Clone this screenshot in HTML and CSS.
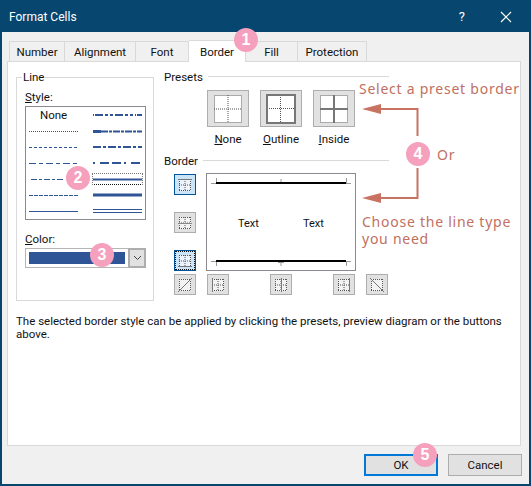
FILE: index.html
```html
<!DOCTYPE html>
<html lang="en">
<head>
    <meta charset="UTF-8">
    <title>Format Cells</title>
    <link rel="stylesheet" href="styles.css">
</head>
<body>
    <svg class="defs" width="0" height="0">
        <symbol id="dots" viewBox="0 0 22 22">
            <rect x="5" y="5" width="12" height="12" fill="#fff" fill-opacity="0.6"/>
            <path d="M5 5.500H17M5 16.500H17M5.500 5V17M16.500 5V17M5 11H17M11 5V17" fill="none" stroke="#555" stroke-dasharray="1 1"/>
        </symbol>
        <symbol id="square" viewBox="0 0 22 22">
            <rect x="5" y="5" width="12" height="12" fill="#fff" fill-opacity="0.6"/>
            <path d="M5 5.500H17M5 16.500H17M5.500 5V17M16.500 5V17" fill="none" stroke="#555" stroke-dasharray="1 1"/>
        </symbol>
    </svg>
    <div class="window">
        <div class="titlebar">
            <span class="title">Format Cells</span>
            <span class="help">?</span>
            <svg class="close" width="12" height="12" viewBox="0 0 12 12"><path d="M1 1L11 11M11 1L1 11" stroke="#fff" stroke-width="1.200" fill="none"/></svg>
        </div>
        <div class="content">
            <div class="tabs">
                <div class="tab t-number">Number</div>
                <div class="tab t-align">Alignment</div>
                <div class="tab t-font">Font</div>
                <div class="tab t-border active">Border</div>
                <div class="tab t-fill">Fill</div>
                <div class="tab t-prot">Protection</div>
            </div>
            <div class="panel">
                <div class="columns">
                    <fieldset class="line-group">
                        <legend>Line</legend>
                        <div class="field-label"><u>S</u>tyle:</div>
                        <div class="style-list">
                            <div class="none-item">None</div>
                            <svg class="ln right"><line x1="0" x2="49" y1="4" y2="4" stroke-width="2" stroke-dasharray="1 1 8 2 3 2 3 2 8 2 3 2 3 2"/></svg>
                            <svg class="ln"><line x1="0" x2="49" y1="4.500" y2="4.500" stroke-dasharray="1 1"/></svg>
                            <svg class="ln right"><rect x="0" y="3" width="8" height="3" stroke="none"/><line x1="8" x2="49" y1="4.500" y2="4.500" stroke-width="2" stroke-dasharray="7 1 3 1"/></svg>
                            <svg class="ln"><line x1="0" x2="49" y1="4.500" y2="4.500" stroke-dasharray="3 2"/></svg>
                            <svg class="ln right"><line x1="0" x2="49" y1="4" y2="4" stroke-width="2" stroke-dasharray="8 2 3 2"/></svg>
                            <svg class="ln"><line x1="0" x2="49" y1="4.500" y2="4.500" stroke-dasharray="7 3 4 3"/></svg>
                            <svg class="ln right"><line x1="0" x2="49" y1="4" y2="4" stroke-width="2" stroke-dasharray="2 5 9 3 9 3"/></svg>
                            <svg class="ln"><line x1="2" x2="35" y1="4.500" y2="4.500" stroke-dasharray="6 2 3 2"/></svg>
                            <div class="selected-item"><svg class="ln-sel"><line x1="0" x2="49" y1="2.500" y2="2.500" stroke-width="2"/></svg></div>
                            <svg class="ln"><line x1="0" x2="49" y1="4.500" y2="4.500" stroke-dasharray="4 1"/></svg>
                            <svg class="ln right"><line x1="0" x2="49" y1="4" y2="4" stroke-width="3"/></svg>
                            <svg class="ln"><line x1="0" x2="49" y1="4.500" y2="4.500"/></svg>
                            <svg class="ln right"><path d="M0 2.500H49M0 5.500H49" fill="none"/></svg>
                        </div>
                        <div class="field-label color-label"><u>C</u>olor:</div>
                        <div class="combo">
                            <div class="swatch-wrap"><div class="swatch"></div></div>
                            <div class="combo-btn">
                                <svg width="9" height="6" viewBox="0 0 9 6"><path d="M1 1L4.500 4.500L8 1" fill="none" stroke="#444" stroke-width="1"/></svg>
                            </div>
                        </div>
                    </fieldset>

                    <div class="right-col">
                        <div class="group-head"><span>Presets</span><i></i></div>
                        <div class="presets">
                            <div class="preset">
                                <div class="preset-btn"><svg width="30" height="30" viewBox="0 0 30 30"><rect x="1" y="1" width="28" height="28" fill="#fff"/><path d="M1.500 1.500H28.500V28.500H1.500ZM1 15H29M15 1V29" fill="none" stroke="#555" stroke-dasharray="1 1"/></svg></div>
                                <span><u>N</u>one</span>
                            </div>
                            <div class="preset">
                                <div class="preset-btn"><svg width="30" height="30" viewBox="0 0 30 30"><rect x="1" y="1" width="28" height="28" fill="#fff"/><path d="M1 14.500H29M14.500 1V29" fill="none" stroke="#555" stroke-dasharray="1 1"/><rect x="1" y="1" width="28" height="28" fill="none" stroke="#777" stroke-width="2"/></svg></div>
                                <span><u>O</u>utline</span>
                            </div>
                            <div class="preset">
                                <div class="preset-btn"><svg width="30" height="30" viewBox="0 0 30 30"><rect x="1" y="1" width="28" height="28" fill="#fff"/><path d="M1.500 1.500H28.500V28.500H1.500Z" fill="none" stroke="#555" stroke-dasharray="1 1"/><path d="M1 15H29M15 1V29" fill="none" stroke="#777" stroke-width="2"/></svg></div>
                                <span><u>I</u>nside</span>
                            </div>
                        </div>
                        <div class="group-head border-head"><span>Border</span><i></i></div>
                        <div class="border-top">
                            <div class="side-btns">
                                <div class="mini on"><svg width="22" height="22"><use href="#dots"/><path d="M4 5.500H18" stroke="#777"/></svg></div>
                                <div class="mini"><svg width="22" height="22"><use href="#dots"/><path d="M4 11.500H18" stroke="#888"/></svg></div>
                                <div class="mini on-focus"><svg width="22" height="22"><use href="#dots"/><path d="M4 16.500H18" stroke="#777"/></svg></div>
                            </div>
                            <div class="preview">
                                <svg width="148" height="96" viewBox="0 0 148 96">
                                    <path d="M4 9.500H9M139 9.500H144M9.500 4V9M74 5V9M139.500 4V9M4 87.500H9M139 87.500H144M9.500 88V92M74 88V92M139.500 88V92M71 8.500H77M71 88.500H77" stroke="#999" fill="none"/>
                                    <path d="M9 9H139M9 87H139" stroke="#000" stroke-width="2" fill="none"/>
                                    <text x="31" y="53">Text</text>
                                    <text x="96" y="53">Text</text>
                                </svg>
                            </div>
                        </div>
                        <div class="border-bottom">
                            <div class="mini"><svg width="22" height="22"><use href="#square"/><path d="M4 18L18 4" stroke="#777"/></svg></div>
                            <div class="mini"><svg width="22" height="22"><use href="#dots"/><path d="M5.500 4V18" stroke="#777"/></svg></div>
                            <div class="mini wide"><svg width="22" height="22"><use href="#dots"/><path d="M11.500 4V18" stroke="#777"/></svg></div>
                            <div class="mini wide"><svg width="22" height="22"><use href="#dots"/><path d="M16.500 4V18" stroke="#777"/></svg></div>
                            <div class="mini"><svg width="22" height="22"><use href="#square"/><path d="M4 4L18 18" stroke="#777"/></svg></div>
                        </div>
                    </div>
                </div>
                <p class="note">The selected border style can be applied by clicking the presets, preview diagram or the buttons above.</p>
            </div>
            <div class="actions">
                <div class="btn primary">OK</div>
                <div class="btn">Cancel</div>
            </div>
        </div>

        <svg class="arrows" width="531" height="486" viewBox="0 0 531 486">
            <path d="M381 109H417.500V136M417.500 168V198H381" fill="none" stroke="#c87361" stroke-width="2"/>
            <path d="M362 109L381 104V114ZM362 198L381 193V203Z" fill="#c87361"/>
        </svg>
        <div class="note-text n-select">Select a preset border</div>
        <div class="note-text n-choose">Choose the line type<br>you need</div>
        <div class="note-text n-or">Or</div>
        <div class="badge b1">1</div>
        <div class="badge b2">2</div>
        <div class="badge b3">3</div>
        <div class="badge b4">4</div>
        <div class="badge b5">5</div>
    </div>
</body>
</html>
```

FILE: styles.css
```css
* {
    box-sizing: border-box;
}

body {
    margin: 0;
    background: #f0f0f0;
    font-family: Roboto, "Noto Sans", sans-serif;
    font-size: 11.5px;
    color: #111;
}

.defs {
    position: absolute;
}

.window {
    position: relative;
    width: 531px;
    height: 486px;
    background: #f0f0f0;
    border: 2px solid #06466f;
    border-top-width: 1px;
    overflow: hidden;
}

.titlebar {
    display: flex;
    align-items: center;
    height: 31px;
    padding: 0 7px;
    background: #06466f;
    color: #fff;
    font-size: 12px;
}

.title {
    flex: 1;
}

.help {
    margin-right: 35px;
    font-size: 13px;
}

.close {
    margin-right: 10px;
}

.content {
    padding: 7px 8px 0 5px;
}

.tabs {
    display: flex;
    height: 22px;
    padding-left: 2px;
    align-items: flex-end;
}

.tab {
    display: flex;
    align-items: center;
    justify-content: center;
    height: 20px;
    background: #f0f0f0;
    border: 1px solid #d9d9d9;
    border-bottom: none;
    border-left: none;
}

.t-number {
    width: 56px;
    border-left: 1px solid #d9d9d9;
}

.t-align {
    width: 71px;
}

.t-font {
    width: 53px;
}

.t-border {
    width: 57px;
}

.t-fill {
    width: 52px;
}

.t-prot {
    width: 69px;
}

.tab.active {
    position: relative;
    height: 22px;
    margin-bottom: -1px;
    background: #fff;
}

.panel {
    height: 385px;
    background: #fff;
    border: 1px solid #d9d9d9;
}

.columns {
    display: flex;
    padding: 7px 0 0 8px;
}

.line-group {
    width: 138px;
    height: 232px;
    margin: 0;
    padding: 0 0 0 8px;
    border: 1px solid #d9d9d9;
}

legend {
    margin-left: -3px;
    padding: 0 1px;
    line-height: 16px;
}

.field-label {
    height: 16px;
    margin-top: 4px;
    line-height: 17px;
}

.style-list {
    display: grid;
    grid-template-columns: 60px 60px;
    grid-auto-rows: 16px;
    align-items: center;
    width: 121px;
    height: 114px;
    margin-top: 1px;
    padding-left: 3px;
    border: 1px solid #8a8a90;
}

.none-item {
    padding-left: 11px;
    line-height: 17px;
}

.ln,
.ln-sel {
    display: block;
    width: 49px;
    height: 9px;
    stroke: #2f5597;
    fill: #2f5597;
}

.ln.right {
    margin-left: 4px;
}

.selected-item {
    width: 51px;
    height: 12px;
    margin-left: 3px;
    padding-top: 3px;
    border: 1px dotted #777;
    border-bottom-color: #111;
}

.color-label {
    margin-top: 11px;
}

.combo {
    display: flex;
    width: 121px;
    height: 20px;
    margin-top: 1px;
}

.swatch-wrap {
    flex: 1;
    padding: 3px;
    border: 1px solid #b5b5b5;
    border-right: none;
}

.swatch {
    height: 100%;
    background: #2f5597;
}

.combo-btn {
    display: flex;
    align-items: center;
    justify-content: center;
    width: 18px;
    background: #e1e1e1;
    border: 2px solid #adadad;
}

.right-col {
    width: 225px;
    margin-left: 10px;
}

.group-head {
    display: flex;
    align-items: center;
    gap: 5px;
    height: 16px;
}

.group-head i {
    flex: 1;
    height: 1px;
    margin-bottom: 2px;
    background: #d9d9d9;
}

.presets {
    display: flex;
    gap: 11px;
    margin-top: 5px;
    margin-left: 43px;
}

.preset {
    display: flex;
    flex-direction: column;
    align-items: center;
    gap: 4px;
    width: 42px;
}

.preset span {
    line-height: 16px;
}

.preset-btn {
    display: flex;
    align-items: center;
    justify-content: center;
    width: 42px;
    height: 37px;
    background: #e1e1e1;
    border: 1px solid #adadad;
}

.border-head {
    margin-top: 6px;
}

.border-top {
    display: flex;
    gap: 10px;
    margin: 4px 0 0 10px;
}

.side-btns {
    display: flex;
    flex-direction: column;
    justify-content: space-between;
    padding-top: 1px;
}

.mini {
    width: 22px;
    height: 21px;
    background: #e1e1e1;
    border: 1px solid #adadad;
    overflow: hidden;
}

.mini svg {
    display: block;
    margin: -1px;
}

.mini.on {
    background: #cce4f7;
    border: 1px solid #005499;
}

.mini.on-focus {
    background: #cce4f7;
    border: 1px solid #005499;
    outline: 1px dotted #111;
    outline-offset: -2px;
}

.preview {
    width: 150px;
    height: 98px;
    background: #fff;
    border: 1px solid #8a8a90;
}

.preview svg {
    display: block;
}

.preview text {
    font-family: Roboto, sans-serif;
    font-size: 11px;
    fill: #111;
}

.border-bottom {
    display: flex;
    gap: 11px;
    margin: 3px 0 0 10px;
}

.mini.wide {
    margin-left: 30px;
}

.note {
    width: 500px;
    margin: 14px 0 0 8px;
    line-height: 13px;
}

.actions {
    display: flex;
    justify-content: flex-end;
    gap: 10px;
    margin-top: 8px;
    margin-right: -1px;
}

.btn {
    display: flex;
    align-items: center;
    justify-content: center;
    width: 74px;
    height: 22px;
    background: #e1e1e1;
    border: 1px solid #adadad;
}

.btn.primary {
    border: 2px solid #0078d7;
}

.arrows {
    position: absolute;
    left: -2px;
    top: -1px;
    pointer-events: none;
}

.note-text {
    position: absolute;
    font-family: "Noto Sans", sans-serif;
    font-size: 14px;
    letter-spacing: 0.75px;
    line-height: 17px;
    color: #c0705f;
}

.n-select {
    left: 357px;
    top: 79px;
}

.n-choose {
    left: 360px;
    top: 212px;
}

.n-or {
    left: 435px;
    top: 145px;
}

.badge {
    position: absolute;
    width: 24px;
    height: 24px;
    border-radius: 50%;
    background: #f5a0bd;
    color: #fff;
    font-family: "Liberation Sans", sans-serif;
    font-size: 16px;
    font-weight: bold;
    line-height: 24px;
    text-align: center;
}

.b1 {
    left: 232px;
    top: 27px;
}

.b2 {
    left: 64px;
    top: 165px;
}

.b3 {
    left: 88px;
    top: 242px;
}

.b4 {
    left: 404px;
    top: 141px;
}

.b5 {
    left: 411px;
    top: 442px;
}
```
